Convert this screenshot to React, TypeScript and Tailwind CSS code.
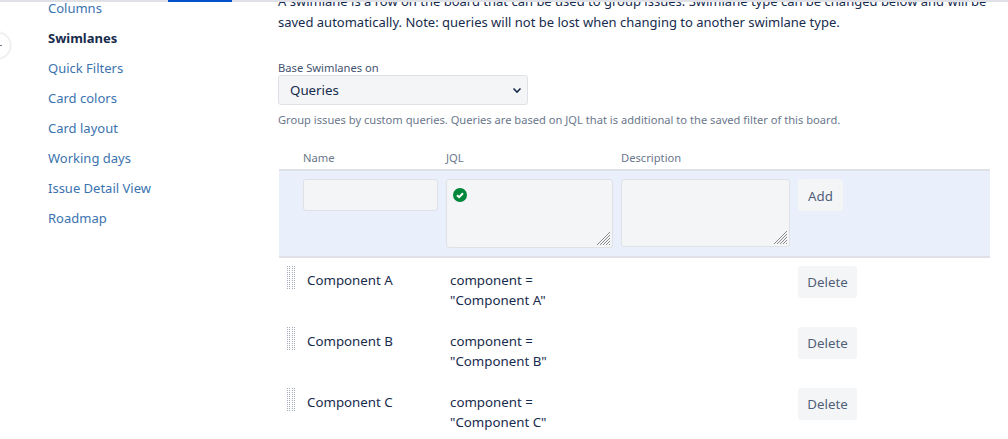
const navItems = ['Columns', 'Swimlanes', 'Quick Filters', 'Card colors', 'Card layout', 'Working days', 'Issue Detail View', 'Roadmap']

const rows = [
  { name: 'Component A', jql: '"Component A"' },
  { name: 'Component B', jql: '"Component B"' },
  { name: 'Component C', jql: '"Component C"' },
]

function ResizeGrip() {
  return (
    <svg className="absolute right-[1px] bottom-[1px]" width="15" height="15" viewBox="0 0 15 15">
      <path d="M14 1 1 14M14 4 4 14M14 7 7 14M14 10 10 14M14 13 13 14" stroke="#8a8a8a" strokeWidth="1" fill="none" />
    </svg>
  )
}

function DragHandle() {
  return (
    <div className="grid grid-cols-4 gap-[1px] w-[8px] h-[24px] content-start">
      {Array.from({ length: 48 }).map((_, i) => (
        <span key={i} className="w-[1px] h-[1px] bg-[#a5adba]" />
      ))}
    </div>
  )
}

export default function App() {
  return (
    <div className="relative w-[1008px] h-[439px] overflow-hidden bg-white text-[#172b4d] font-['Noto_Sans','Open_Sans',sans-serif] text-[13.3px]">
      {/* top bar shadow + active tab */}
      <div className="absolute top-0 left-0 right-0 h-[2px] bg-[#dfe1e6] z-10" />
      <div className="absolute top-0 left-[168px] w-[64px] h-[2px] bg-[#0052cc] z-20" />

      {/* collapse button */}
      <div className="absolute left-[-15px] top-[33px] w-[25px] h-[25px] rounded-full bg-white shadow-[0_0_3px_rgba(9,30,66,0.25)] flex items-center justify-end pr-[8px] z-10">
        <span className="w-[3px] h-[1px] bg-[#6b778c]" />
      </div>

      <div className="flex">
        <nav className="w-[278px] shrink-0 pl-[48px] mt-[-7px] text-[13px]">
          {navItems.map((item) => (
            <div
              key={item}
              className={item === 'Swimlanes' ? 'h-[30px] leading-[30px] font-bold text-[#172b4d]' : 'h-[30px] leading-[30px] text-[#3b73af]'}
            >
              {item}
            </div>
          ))}
        </nav>

        <main className="w-[730px] shrink-0">
          <p className="mt-[-9px] leading-[21px] w-[714px] text-[13px] text-[#172b4d]">
            A swimlane is a row on the board that can be used to group issues. Swimlane type can be changed below and will be saved automatically. Note: queries will not be lost when changing to another swimlane type.
          </p>

          <label className="block mt-[27px] text-[11.2px] leading-[15px] font-normal text-[#44546f]">Base Swimlanes on</label>
          <div className="w-[250px] h-[30px] rounded-[3px] border border-[#dfe1e6] bg-[#f4f5f7] flex items-center justify-between pl-[11px] pr-[4px]">
            <span className="pt-[1px]">Queries</span>
            <svg width="12" height="12" viewBox="0 0 12 12">
              <path d="M2.5 4.5 6 8l3.5-3.5" stroke="#172b4d" strokeWidth="1.6" fill="none" />
            </svg>
          </div>
          <p className="mt-[7px] text-[11.15px] leading-[16px] text-[#6b778c]">
            Group issues by custom queries. Queries are based on JQL that is additional to the saved filter of this board.
          </p>

          <div className="mt-[22px] flex text-[11.2px] leading-[16px] text-[#6b778c] pl-[25px]">
            <span className="w-[143px]">Name</span>
            <span className="w-[175px]">JQL</span>
            <span>Description</span>
          </div>

          <div className="mt-[3px] ml-[1px] w-[711px] h-[89px] bg-[#e9f0fb] border-y-2 border-[#dfe1e6] flex items-start pt-[8px] pl-[24px]">
            <div className="w-[135px] h-[32px] rounded-[3px] border border-[#dfe1e6] bg-[#f4f5f7]" />
            <div className="relative ml-[8px] w-[167px] h-[69px] rounded-[3px] border border-[#dfe1e6] bg-[#f4f5f7]">
              <svg className="absolute left-[6px] top-[8px]" width="14" height="14" viewBox="0 0 14 14">
                <circle cx="7" cy="7" r="7" fill="#00873c" />
                <path d="M4 7.2 6.1 9.2 10 5.2" stroke="#fff" strokeWidth="2" fill="none" />
              </svg>
              <ResizeGrip />
            </div>
            <div className="relative ml-[8px] w-[169px] h-[68px] rounded-[3px] border border-[#dfe1e6] bg-[#f4f5f7]">
              <ResizeGrip />
            </div>
            <button className="ml-[8px] w-[45px] h-[32px] pt-[3px] rounded-[3px] bg-[#f4f5f7] text-[#505f79]">Add</button>
          </div>

          <div className="pt-[8px]">
            {rows.map((row) => (
              <div key={row.name} className="flex items-start h-[61px] pl-[9px]">
                <DragHandle />
                <div className="ml-[12px] w-[143px] pt-[4px] leading-[20px]">{row.name}</div>
                <div className="w-[348px] pt-[4px] leading-[20px]">
                  component =<br />
                  {row.jql}
                </div>
                <button className="w-[59px] h-[32px] pt-[2px] rounded-[3px] bg-[#f4f5f7] text-[#505f79]">Delete</button>
              </div>
            ))}
          </div>
        </main>
      </div>
    </div>
  )
}
